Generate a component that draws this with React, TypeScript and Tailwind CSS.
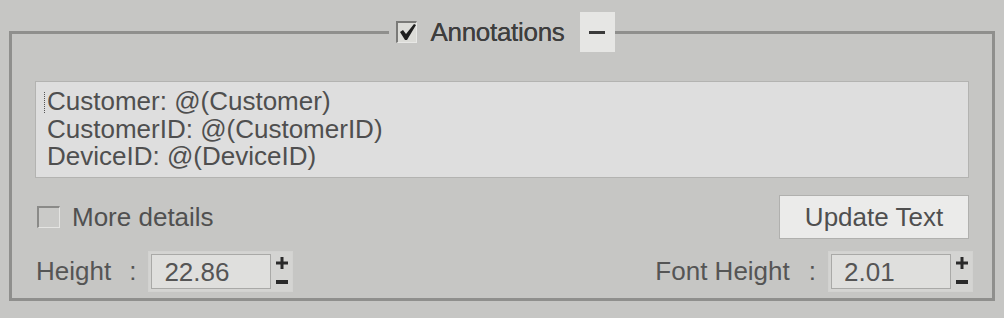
import React, { useState } from 'react'

const font = { fontFamily: '"Liberation Sans", Arial, sans-serif' }

function Spin({ value }: { value: string }) {
  return (
    <div className="flex h-[41px] items-stretch border border-[#d2d2d0] bg-[#d4d4d2] p-[2px]">
      <div className="flex w-[120px] items-center border border-[#a9a9a7] bg-[#dfdfdd] pl-[12px] text-[26px] leading-none text-[#555]">
        {value}
      </div>
      <div className="ml-[3px] flex w-[16px] flex-col items-center justify-between py-[3px]">
        <svg width="12" height="12" viewBox="0 0 12 12">
          <path d="M4.5 0h3v4.5H12v3H7.5V12h-3V7.5H0v-3h4.5z" fill="#2a2a2a" />
        </svg>
        <svg width="12" height="4" viewBox="0 0 12 4" className="mb-[2px]">
          <rect width="12" height="4" fill="#2a2a2a" />
        </svg>
      </div>
    </div>
  )
}

export default function App() {
  const [enabled, setEnabled] = useState(true)
  const [more, setMore] = useState(false)

  return (
    <div className="h-[318px] w-[1004px] bg-[#c6c6c4] pt-[12px]" style={font}>
      <fieldset className="mx-[9px] h-[289px] border-[3px] border-[#8f8f8d] px-[23px]">
        <legend className="mx-auto flex h-[40px] items-center pl-[7px]">
          <button
            onClick={() => setEnabled(!enabled)}
            className="flex h-[22px] w-[21px] items-center justify-center border-t-2 border-l-2 border-[#7a7a78] border-r border-b border-r-[#e8e8e6] border-b-[#e8e8e6] bg-[#dcdcd8]"
          >
            {enabled && (
              <svg width="17" height="17" viewBox="0 0 17 17">
                <path d="M1 8l3-2 3 4L15 0l2 1-9 15h-2z" fill="#1e1e1e" />
              </svg>
            )}
          </button>
          <span className="ml-[13px] text-[26px] tracking-[-0.3px] text-[#3e3e3e] [text-shadow:0_0_0.6px_#3e3e3e]">
            Annotations
          </span>
          <button className="ml-[15px] flex h-[40px] w-[35px] items-center justify-center bg-[#e6e6e4]">
            <span className="block h-[3px] w-[16px] bg-[#3a3a3a]" />
          </button>
        </legend>

        <div className="relative mt-[29px] h-[97px] border border-[#b3b3b1] bg-[#dedede] pt-[6px] pl-[11px] text-[26px] leading-[27.5px] text-[#4f4f4f]">
          <span className="absolute top-[10px] left-[8px] h-[21px] border-l border-dotted border-[#555]" />
          <div>Customer: @(Customer)</div>
          <div>CustomerID: @(CustomerID)</div>
          <div>DeviceID: @(DeviceID)</div>
        </div>

        <div className="mt-[17px] flex h-[44px] items-center justify-between">
          <label className="ml-[2px] flex items-center" onClick={() => setMore(!more)}>
            <span className="block h-[22px] w-[23px] border-t-2 border-l-2 border-[#8a8a88] border-r border-b border-r-[#e4e4e2] border-b-[#e4e4e2] bg-[#cacac8]" />
            <span className="ml-[12px] text-[26px] text-[#505050]">More details</span>
          </label>
          <button className="h-[44px] w-[190px] border border-[#b0b0ae] bg-[#ebebea] text-[26px] text-[#4f4f4f]">
            Update Text
          </button>
        </div>

        <div className="mt-[12px] flex items-center justify-between">
          <div className="flex items-center">
            <span className="ml-[1px] text-[26px] text-[#555]">Height</span>
            <span className="ml-[18px] text-[26px] text-[#555]">:</span>
            <div className="ml-[12px]">
              <Spin value="22.86" />
            </div>
          </div>
          <div className="mr-[-4px] flex items-center">
            <span className="text-[26px] text-[#555]">Font Height</span>
            <span className="ml-[19px] text-[26px] text-[#555]">:</span>
            <div className="ml-[12px]">
              <Spin value="2.01" />
            </div>
          </div>
        </div>
      </fieldset>
    </div>
  )
}
